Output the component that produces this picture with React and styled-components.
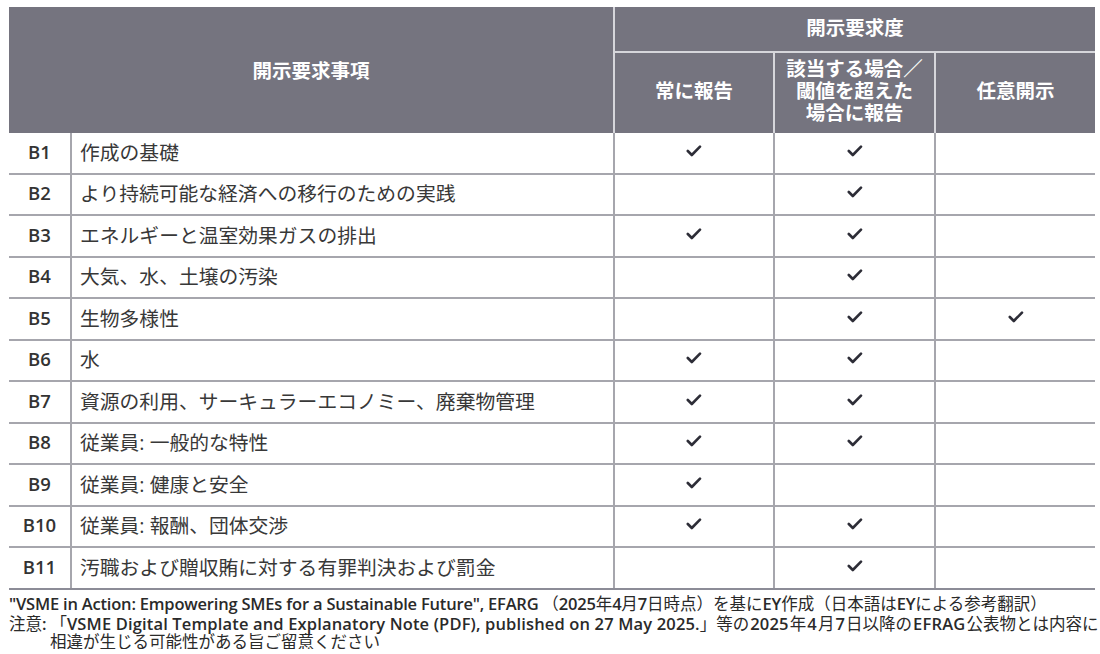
import React from "react";
import styled, { createGlobalStyle } from "styled-components";

const GlobalStyle = createGlobalStyle`
  html, body {
    margin: 0;
    padding: 0;
    background: #ffffff;
  }
  body {
    font-family: "Noto Sans CJK JP", "Open Sans", sans-serif;
    color: #333333;
  }
`;

const COLS = "61px 543px 160px 161px 161px";
const HEAD_BG = "#75747f";
const HEAD_LINE = "#d6d6db";
const BODY_LINE = "#a6a6ad";

const Page = styled.div`
  padding: 7px 5px 0 9px;
  width: 1086px;
`;

const Head = styled.div`
  display: grid;
  grid-template-columns: ${COLS};
  grid-template-rows: 44px 82px;
  background: ${HEAD_BG};
`;

const HeadCell = styled.div`
  grid-column: ${(p) => p.$col};
  grid-row: ${(p) => p.$row};
  display: flex;
  align-items: center;
  justify-content: center;
  text-align: center;
  color: #ffffff;
  font-family: "Noto Sans CJK JP", sans-serif;
  font-weight: 700;
  font-size: 19.5px;
  line-height: 22px;
  box-sizing: border-box;
  padding-bottom: ${(p) => p.$lift || 0}px;
  border-left: ${(p) => (p.$line ? `2px solid ${HEAD_LINE}` : "none")};
  border-top: ${(p) => (p.$top ? `2px solid ${HEAD_LINE}` : "none")};
`;

const Row = styled.div`
  display: grid;
  grid-template-columns: ${COLS};
  height: 41.5px;
  box-sizing: border-box;
  border-bottom: 2px solid ${(p) => (p.$last ? "#8c8c97" : BODY_LINE)};
`;

const Code = styled.div`
  display: flex;
  align-items: center;
  justify-content: center;
  padding-bottom: 3px;
  box-sizing: border-box;
  font-family: "Open Sans", sans-serif;
  font-weight: 600;
  font-size: 18.5px;
  color: #333333;
`;

const Item = styled.div`
  display: flex;
  align-items: center;
  padding: 0 0 3px 8px;
  box-sizing: border-box;
  border-left: 2px solid ${BODY_LINE};
  font-family: "Open Sans", "Noto Sans CJK JP", sans-serif;
  font-size: 19.8px;
  color: #383838;
  white-space: nowrap;
`;

const Mark = styled.div`
  display: flex;
  align-items: center;
  justify-content: center;
  padding-bottom: 4px;
  box-sizing: border-box;
  border-left: 2px solid ${BODY_LINE};
`;

const Notes = styled.div`
  padding-top: 5px;
  font-family: "Noto Sans CJK JP", sans-serif;
  font-size: 16.5px;
  color: #2a2a2a;
  white-space: nowrap;
`;

const Note = styled.p`
  margin: 0 0 ${(p) => (p.$gap ? "3px" : "0")};
  line-height: 16.5px;
  padding-left: ${(p) => (p.$hang ? "41px" : "0")};
  text-indent: ${(p) => (p.$hang ? "-41px" : "0")};
`;

const L = styled.span`
  font-family: "Open Sans", sans-serif;
  font-weight: 600;
  letter-spacing: ${(p) => p.$ls ?? -0.2}px;
  margin: 0 ${(p) => p.$pad || 0}px;
`;

const Check = () => (
  <svg width="16" height="12" viewBox="0 0 16 12">
    <path
      d="M1.8 6 L5.8 10 L14 1.6"
      fill="none"
      stroke="#2d2d37"
      strokeWidth="2.6"
      strokeLinecap="round"
      strokeLinejoin="round"
    />
  </svg>
);

const rows = [
  ["B1", "作成の基礎", 1, 1, 0],
  ["B2", "より持続可能な経済への移行のための実践", 0, 1, 0],
  ["B3", "エネルギーと温室効果ガスの排出", 1, 1, 0],
  ["B4", "大気、水、土壌の汚染", 0, 1, 0],
  ["B5", "生物多様性", 0, 1, 1],
  ["B6", "水", 1, 1, 0],
  ["B7", "資源の利用、サーキュラーエコノミー、廃棄物管理", 1, 1, 0],
  ["B8", "従業員: 一般的な特性", 1, 1, 0],
  ["B9", "従業員: 健康と安全", 1, 0, 0],
  ["B10", "従業員: 報酬、団体交渉", 1, 1, 0],
  ["B11", "汚職および贈収賄に対する有罪判決および罰金", 0, 1, 0],
];

export default function App() {
  return (
    <Page>
      <GlobalStyle />
      <Head>
        <HeadCell $col="1 / 3" $row="1 / 3">
          開示要求事項
        </HeadCell>
        <HeadCell $col="3 / 6" $row="1" $line $lift={5}>
          開示要求度
        </HeadCell>
        <HeadCell $col="3" $row="2" $line $top $lift={6}>
          常に報告
        </HeadCell>
        <HeadCell $col="4" $row="2" $line $top $lift={6}>
          該当する場合／
          <br />
          閾値を超えた
          <br />
          場合に報告
        </HeadCell>
        <HeadCell $col="5" $row="2" $line $top $lift={6}>
          任意開示
        </HeadCell>
      </Head>
      {rows.map(([code, label, a, b, c], i) => (
        <Row key={code} $last={i === rows.length - 1}>
          <Code>{code}</Code>
          <Item>{label}</Item>
          <Mark>{a ? <Check /> : null}</Mark>
          <Mark>{b ? <Check /> : null}</Mark>
          <Mark>{c ? <Check /> : null}</Mark>
        </Row>
      ))}
      <Notes>
        <Note $gap>
          <L>"VSME in Action: Empowering SMEs for a Sustainable Future", EFARG</L>{" "}
          （<L>2025</L>年<L>4</L>月<L>7</L>日時点）を基に<L>EY</L>作成（日本語は
          <L>EY</L>による参考翻訳）
        </Note>
        <Note $hang>
          注意<L>: </L>「
          <L $ls={0.15}>
            VSME Digital Template and Explanatory Note (PDF), published on 27
            May 2025.
          </L>
          」等の<L $ls={0.2} $pad={1}>2025</L>年<L $ls={0.2} $pad={1}>4</L>月
          <L $ls={0.2} $pad={1}>7</L>日以降の<L $ls={0.2} $pad={1}>EFRAG</L>
          公表物とは内容に
          <br />
          相違が生じる可能性がある旨ご留意ください
        </Note>
      </Notes>
    </Page>
  );
}
